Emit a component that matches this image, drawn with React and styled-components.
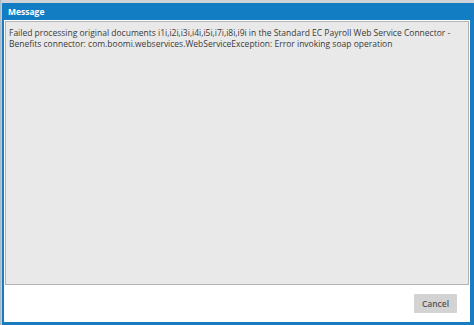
import styled, { createGlobalStyle } from 'styled-components';

const GlobalStyle = createGlobalStyle`
  html, body {
    margin: 0;
    padding: 0;
    background: #c9cdd1;
    font-family: "Open Sans", "Liberation Sans", sans-serif;
  }
`;

const Page = styled.div`
  width: 474px;
  height: 325px;
  display: flex;
  overflow: hidden;
  background: linear-gradient(to right, #9fb3c4 0, #d0d4d8 2px);
`;

const Dialog = styled.div`
  margin: 3px 0 0 2px;
  flex: 1;
  display: flex;
  flex-direction: column;
  background: #ffffff;
  border: 2px solid #1a7cc0;
  border-top: 0;
  border-right-width: 4px;
  border-bottom-width: 3px;
`;

const TitleBar = styled.div`
  height: 17px;
  background: #127dc2;
  color: #ffffff;
  font-size: 8.5px;
  font-weight: 700;
  display: flex;
  align-items: center;
  padding: 0 6px;
  margin: 0 -2px 0 -2px;
`;

const Body = styled.div`
  flex: 1;
  display: flex;
  flex-direction: column;
  padding: 1px 1px 0 1px;
`;

const MessageBox = styled.div`
  height: 264px;
  background: #e9e9e9;
  border: 1px solid #b4b4b4;
  color: #3a3a3a;
  font-size: 8.5px;
  line-height: 11px;
  padding: 5px 3px;
  box-sizing: border-box;
`;

const Footer = styled.div`
  display: flex;
  justify-content: flex-end;
  padding: 9px 12px 0 0;
`;

const Button = styled.button`
  width: 43px;
  height: 19px;
  border: 0;
  border-radius: 1px;
  background: #d3d3d3;
  color: #555555;
  font-family: "Open Sans", "Liberation Sans", sans-serif;
  font-size: 8.5px;
  font-weight: 600;
  padding: 0;
`;

export default function App() {
  return (
    <>
      <GlobalStyle />
      <Page>
        <Dialog>
          <TitleBar>Message</TitleBar>
          <Body>
            <MessageBox>
              Failed processing original documents i1i,i2i,i3i,i4i,i5i,i7i,i8i,i9i in the Standard EC Payroll Web Service Connector - Benefits connector: com.boomi.webservices.WebServiceException: Error invoking soap operation
            </MessageBox>
            <Footer>
              <Button>Cancel</Button>
            </Footer>
          </Body>
        </Dialog>
      </Page>
    </>
  );
}
